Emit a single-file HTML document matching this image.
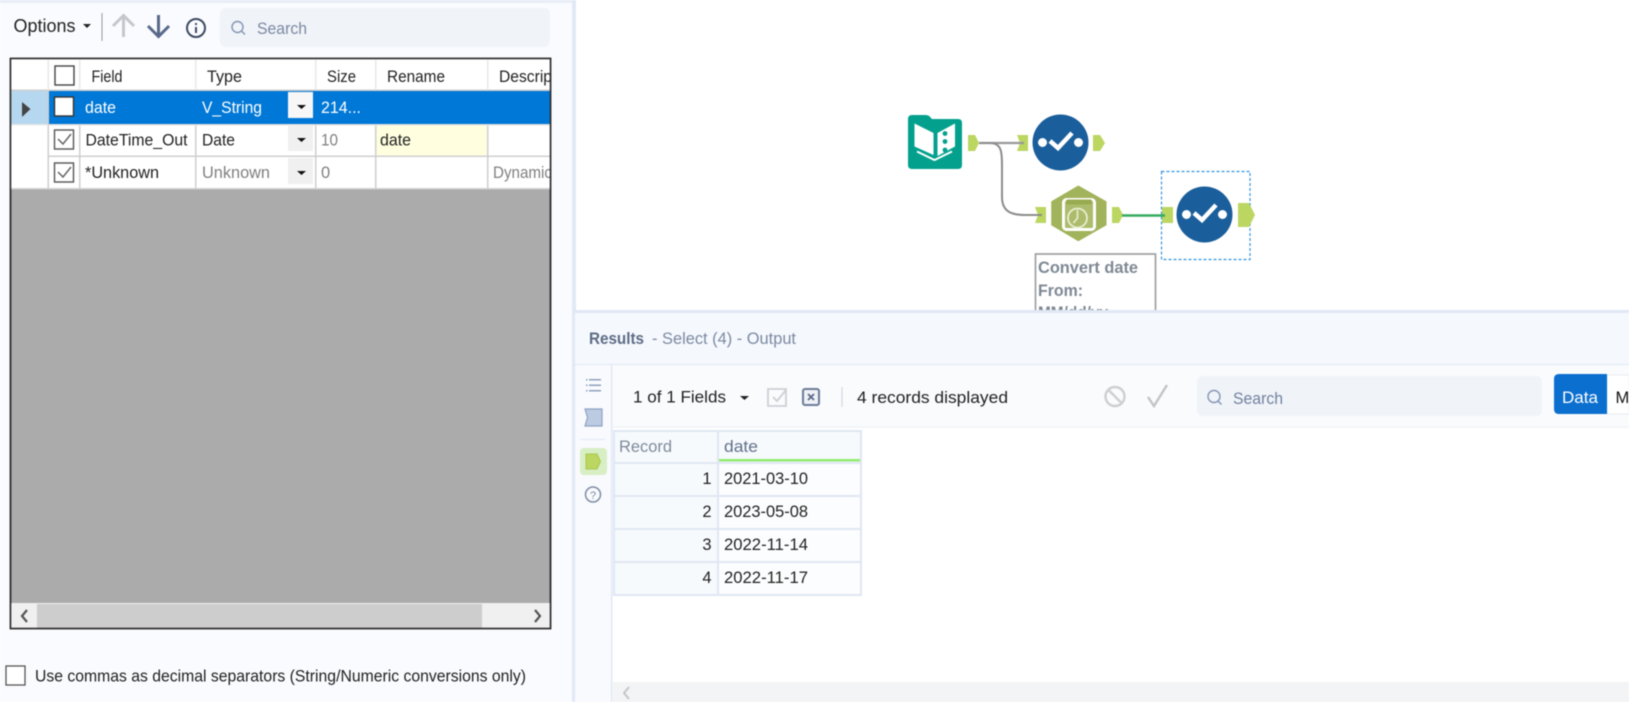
<!DOCTYPE html>
<html><head><meta charset="utf-8"><style>
html,body{margin:0;padding:0;width:1629px;height:702px;overflow:hidden;background:#fff}
svg{display:block;filter:blur(.45px)}
text{font-family:"Liberation Sans",sans-serif;font-size:16.5px;fill:#222}
</style></head><body>
<svg width="1629" height="702" viewBox="0 0 1629 702" xmlns="http://www.w3.org/2000/svg">
<defs>
<clipPath id="g"><rect x="11" y="59" width="539.500" height="569"/></clipPath>
<clipPath id="c"><rect x="1030" y="250" width="130" height="60"/></clipPath>
</defs>
<!-- left panel -->
<rect width="574" height="702" fill="#fafbfe"/>
<rect width="574" height="3" fill="#e8edf6"/>
<rect x="572" width="4" height="702" fill="#e2e9f5"/>
<text x="13.5" y="32" textLength="62" lengthAdjust="spacingAndGlyphs" style="font-size:18px">Options</text>
<path d="M83 24h8l-4 4z" fill="#222"/>
<rect x="101.500" y="13" width="1" height="28" fill="#9a9a9a"/>
<path d="M123.500 37V17M113 26l10.500-10.500L134 26" fill="none" stroke="#c4c8cc" stroke-width="3"/>
<path d="M158.500 15v20M148 26l10.500 10.500L169 26" fill="none" stroke="#58698a" stroke-width="3"/>
<circle cx="196" cy="28" r="9" fill="none" stroke="#3d4a63" stroke-width="2"/>
<rect x="195" y="27" width="2" height="6" fill="#3d4a63"/><rect x="195" y="23" width="2" height="2" fill="#3d4a63"/>
<rect x="220" y="8" width="330" height="39" rx="6" fill="#f0f3f8"/>
<circle cx="237.500" cy="27" r="5.500" fill="none" stroke="#8496b5" stroke-width="1.400"/><path d="M241.500 31l3.500 3.500" stroke="#8496b5" stroke-width="1.400"/>
<text x="257" y="34" textLength="50" lengthAdjust="spacingAndGlyphs" style="fill:#7b89a3">Search</text>

<!-- grid -->
<rect x="10.500" y="58.500" width="540" height="570" fill="#ababab" stroke="#2f2f2f" stroke-width="1.600"/>
<g clip-path="url(#g)">
<rect x="11" y="59" width="540" height="130" fill="#fff"/>
<rect x="11" y="91" width="37" height="33" fill="#b6d7f0"/>
<rect x="376" y="125" width="111" height="31" fill="#ffffe0"/>
<g fill="#cfcfcf">
<rect x="47.500" y="90" width="1.500" height="99"/><rect x="79" y="90" width="1.500" height="99"/><rect x="195" y="90" width="1.500" height="99"/><rect x="315" y="90" width="1.500" height="99"/><rect x="375" y="90" width="1.500" height="99"/><rect x="487" y="90" width="1.500" height="99"/>
<rect x="11" y="89.500" width="540" height="1.500"/><rect x="49" y="155.500" width="502" height="1.500"/><rect x="11" y="188" width="540" height="1.500"/>
</g>
<g fill="#e9e9e9">
<rect x="47.500" y="60" width="1.500" height="30"/><rect x="79" y="60" width="1.500" height="30"/><rect x="195" y="60" width="1.500" height="30"/><rect x="315" y="60" width="1.500" height="30"/><rect x="375" y="60" width="1.500" height="30"/><rect x="487" y="60" width="1.500" height="30"/>
</g>
<rect x="49" y="91" width="502" height="33" fill="#0078d7"/>
<rect x="49" y="124" width="502" height="1.500" fill="#e2e2e2"/>
<rect x="11" y="124" width="37" height="1.500" fill="#e8e8e8"/>
<path d="M22 102l8.500 7-8.500 8z" fill="#444"/>
<!-- checkboxes -->
<rect x="55" y="66" width="19" height="19" fill="#fff" stroke="#444" stroke-width="1.400"/>
<rect x="54.500" y="97" width="19" height="19" fill="#fff" stroke="#333" stroke-width="1.400"/>
<rect x="54.500" y="130" width="19" height="19" fill="#fff" stroke="#555" stroke-width="1.400"/>
<path d="M58 139l5 5 8-10" fill="none" stroke="#666" stroke-width="1.500"/>
<rect x="54.500" y="163" width="19" height="19" fill="#fff" stroke="#555" stroke-width="1.400"/>
<path d="M58 172l5 5 8-10" fill="none" stroke="#666" stroke-width="1.500"/>
<!-- header -->
<text x="91.500" y="82" textLength="31" lengthAdjust="spacingAndGlyphs">Field</text>
<text x="207" y="82" textLength="35" lengthAdjust="spacingAndGlyphs">Type</text>
<text x="327" y="82" textLength="29" lengthAdjust="spacingAndGlyphs">Size</text>
<text x="387" y="82" textLength="58" lengthAdjust="spacingAndGlyphs">Rename</text>
<text x="499" y="82" textLength="53" lengthAdjust="spacingAndGlyphs">Descrip</text>
<!-- row 1 -->
<text x="85" y="113" textLength="31" lengthAdjust="spacingAndGlyphs" style="fill:#fff">date</text>
<text x="202" y="113" textLength="60" lengthAdjust="spacingAndGlyphs" style="fill:#fff">V_String</text>
<rect x="288" y="92" width="25" height="26" fill="#f7f7f7"/><path d="M297 105h9l-4.500 4z" fill="#111"/>
<text x="321" y="113" textLength="40" lengthAdjust="spacingAndGlyphs" style="fill:#fff">214...</text>
<!-- row 2 -->
<text x="85.500" y="145.500" textLength="102" lengthAdjust="spacingAndGlyphs">DateTime_Out</text>
<text x="202" y="145.500" textLength="33" lengthAdjust="spacingAndGlyphs">Date</text>
<rect x="288" y="125" width="25" height="26" fill="#f0f0f0"/><path d="M297 138h9l-4.500 4z" fill="#111"/>
<text x="321" y="145.500" textLength="17" lengthAdjust="spacingAndGlyphs" style="fill:#808080">10</text>
<text x="380" y="145.500" textLength="31" lengthAdjust="spacingAndGlyphs">date</text>
<!-- row 3 -->
<text x="85" y="178" textLength="74" lengthAdjust="spacingAndGlyphs">*Unknown</text>
<text x="202" y="178" textLength="68" lengthAdjust="spacingAndGlyphs" style="fill:#808080">Unknown</text>
<rect x="288" y="158" width="25" height="26" fill="#f0f0f0"/><path d="M297 171h9l-4.500 4z" fill="#111"/>
<text x="321" y="178" style="fill:#808080">0</text>
<text x="493" y="178" textLength="59" lengthAdjust="spacingAndGlyphs" style="fill:#808080">Dynamic</text>
<!-- scrollbar -->
<rect x="11" y="603" width="540" height="26" fill="#f0f0f0"/>
<rect x="37" y="604" width="445" height="24" fill="#cdcdcd"/>
<path d="M27 610l-5 6 5 6" fill="none" stroke="#555" stroke-width="2.200"/>
<path d="M535 610l5 6-5 6" fill="none" stroke="#555" stroke-width="2.200"/>
</g>
<rect x="10.500" y="58.500" width="540" height="570" fill="none" stroke="#2f2f2f" stroke-width="1.600"/>

<rect x="6" y="666" width="19" height="19" fill="#fff" stroke="#555" stroke-width="1.300"/>
<text x="35" y="681.500" textLength="491" lengthAdjust="spacingAndGlyphs">Use commas as decimal separators (String/Numeric conversions only)</text>

<!-- canvas -->
<!-- selection first, anchors on top -->
<rect x="1161.500" y="171.500" width="88.500" height="88" fill="none" stroke="#3694e0" stroke-width="1.200" stroke-dasharray="3 2"/>
<!-- folder -->
<path d="M912 115h14q3 0 5 3l1 1h26q4 0 4 4v42q0 4-4 4h-46q-4 0-4-4v-46q0-4 4-4z" fill="#03a18d"/>
<path d="M914.500 123.500l19 9.500v22l-19-8.500zM937.500 133l17.500-9.500v23l-17.500 9.500z" fill="#fff"/>
<circle cx="945" cy="133.500" r="2.400" fill="#03a18d"/><circle cx="945" cy="141.500" r="2.400" fill="#03a18d"/><circle cx="945" cy="150" r="2.400" fill="#03a18d"/>
<path d="M917 151.500l17.500 8.500 17.500-8.500" fill="none" stroke="#fff" stroke-width="2"/>
<!-- anchors -->
<g fill="#bbd661">
<path d="M968 135h7l4 8-4 8h-7z"/>
<path d="M1017 135h11v16h-11l3-8z"/>
<path d="M1093 135h7l5 8-5 8h-7z"/>
<path d="M1035 207h11v16h-11l3-8z"/>
<path d="M1112 207h7l4 8-4 8h-7z"/>
<path d="M1162 207h11v16h-11z"/>
<path d="M1238 203h11l6 12-6 12h-11z"/>
</g>
<path d="M979 143H1024" fill="none" stroke="#999" stroke-width="2.200"/>
<path d="M979 143H990C1003 143 1002 155 1002 170V197C1002 212 1012 215 1025 215H1042" fill="none" stroke="#8c8c8c" stroke-width="2"/>
<path d="M1122 215.500H1165" stroke="#36ab5f" stroke-width="2.400"/>
<!-- check circles -->
<circle cx="1060.500" cy="142.500" r="28" fill="#1a5e9b"/>
<g fill="#fff"><circle cx="1042.500" cy="142.500" r="4.500"/><circle cx="1078.500" cy="142.500" r="4.500"/></g>
<path d="M1050 141l8 7 14-15" fill="none" stroke="#fff" stroke-width="4.500"/>
<circle cx="1204.500" cy="214.500" r="28" fill="#1a5e9b"/>
<g fill="#fff"><circle cx="1186.500" cy="214.500" r="4.500"/><circle cx="1222.500" cy="214.500" r="4.500"/></g>
<path d="M1194 213l8 7 14-15" fill="none" stroke="#fff" stroke-width="4.500"/>
<!-- hex -->
<path d="M1078.300 186l27.700 15.700v23.300l-27.700 15.700-26.600-15.700v-23.300z" fill="#a1b35b" stroke="#a1b35b" stroke-width="1" stroke-linejoin="round"/>
<rect x="1063.500" y="199.500" width="31" height="30" rx="3" fill="#acbc6c" stroke="#fff" stroke-width="3"/>
<rect x="1066" y="199.500" width="26" height="5" rx="2" fill="#98ab50"/>
<circle cx="1077.500" cy="218" r="9.500" fill="none" stroke="#e8eed2" stroke-width="1.800"/>
<path d="M1077.500 210v8l-4 5" fill="none" stroke="#e8eed2" stroke-width="1.600"/>
<!-- comment -->
<g clip-path="url(#c)">
<rect x="1035.500" y="254" width="120" height="70" fill="#fff" stroke="#9a9a9a" stroke-width="1.600"/>
<text x="1038" y="273" textLength="100" lengthAdjust="spacingAndGlyphs" style="fill:#7e8894;font-weight:bold">Convert date</text>
<text x="1038" y="296" textLength="45" lengthAdjust="spacingAndGlyphs" style="fill:#7e8894;font-weight:bold">From:</text>
<text x="1038" y="318" textLength="70" lengthAdjust="spacingAndGlyphs" style="fill:#7e8894;font-weight:bold">MM/dd/yy</text>
</g>

<!-- results panel -->
<rect x="575" y="311" width="1054" height="391" fill="#f5f8fd"/>
<rect x="575" y="310" width="1054" height="3" fill="#e1e8f5"/>
<rect x="575" y="364" width="1054" height="1.500" fill="#e1e8f5"/>
<text x="589" y="344" textLength="55" lengthAdjust="spacingAndGlyphs" style="fill:#5d6c85;font-weight:bold">Results</text>
<text x="652" y="344" textLength="144" lengthAdjust="spacingAndGlyphs" style="fill:#7c8aa2">- Select (4) - Output</text>
<rect x="612" y="365" width="1017" height="63" fill="#f9fbfd"/>
<rect x="612" y="428" width="1017" height="274" fill="#fff"/>
<rect x="576" y="365" width="35" height="337" fill="#f8fafd"/>
<rect x="611" y="365" width="1.500" height="337" fill="#e1e8f5"/>
<rect x="612" y="426" width="1017" height="2" fill="#f3f5f8"/>
<!-- sidebar -->
<g fill="#8fa0bd"><rect x="589" y="379" width="12" height="1.500"/><rect x="589" y="384.500" width="12" height="1.500"/><rect x="589" y="390" width="12" height="1.500"/><rect x="586" y="379" width="1.500" height="1.500"/><rect x="586" y="384.500" width="1.500" height="1.500"/><rect x="586" y="390" width="1.500" height="1.500"/></g>
<path d="M585 409h17v17h-17l2.500-8.500z" fill="#bccbe2" stroke="#8fa3c3" stroke-width="1.200"/>
<rect x="580" y="439" width="25" height="1" fill="#e1e8f5"/>
<rect x="580" y="448" width="27" height="27" rx="4" fill="#d8eec4"/>
<path d="M586 454h11l3.500 7.500-3.500 7.500h-11z" fill="#bbd661" stroke="#a9c84f" stroke-width="1"/>
<circle cx="593" cy="494.500" r="7.500" fill="none" stroke="#7f8da6" stroke-width="1.500"/>
<text x="590" y="499" style="font-size:11px;fill:#7f8da6">?</text>
<!-- toolbar -->
<text x="633" y="402.500" textLength="93" lengthAdjust="spacingAndGlyphs">1 of 1 Fields</text>
<path d="M740 396h9l-4.500 4z" fill="#222"/>
<path d="M768 389h18v17h-18z" fill="none" stroke="#cdd0d5" stroke-width="1.800"/><path d="M773 397l4 4 9-11" fill="none" stroke="#cdd0d5" stroke-width="1.800"/>
<rect x="803" y="389" width="16" height="16" rx="2" fill="#eef1f6" stroke="#6c7c98" stroke-width="2"/><path d="M808 394l6 6m0-6l-6 6" stroke="#5b6b88" stroke-width="1.800"/>
<rect x="841.500" y="387" width="1" height="20" fill="#ccd3de"/>
<text x="857" y="403" textLength="151" lengthAdjust="spacingAndGlyphs">4 records displayed</text>
<circle cx="1115" cy="396.500" r="9.500" fill="none" stroke="#cfcfcf" stroke-width="2.400"/><path d="M1108.500 390l13 13" stroke="#cfcfcf" stroke-width="2.400"/>
<path d="M1148 397l6 9 13-21" fill="none" stroke="#c4c4c4" stroke-width="2.400"/>
<rect x="1197" y="376" width="345" height="40" rx="6" fill="#f0f3f8"/>
<circle cx="1214" cy="396.500" r="6" fill="none" stroke="#8496b5" stroke-width="1.400"/><path d="M1218 401l3.500 3.500" stroke="#8496b5" stroke-width="1.400"/>
<text x="1233" y="404" textLength="50" lengthAdjust="spacingAndGlyphs" style="fill:#7282a0">Search</text>
<rect x="1607" y="375" width="22" height="39" fill="#fff" stroke="#e8ecf2"/>
<path d="M1559 374h48v40h-48q-5 0-5-5v-30q0-5 5-5z" fill="#0b6fcf"/>
<text x="1562" y="403" textLength="36" lengthAdjust="spacingAndGlyphs" style="fill:#fff">Data</text>
<text x="1615.500" y="403" style="fill:#111">M</text>
<!-- table -->
<g fill="#f7fafd" stroke="#dfe7f3" stroke-width="2">
<rect x="614" y="431" width="104" height="32"/><rect x="718" y="431" width="143" height="32"/>
<rect x="614" y="463" width="104" height="33"/><rect x="718" y="463" width="143" height="33" fill="#fcfdfe"/>
<rect x="614" y="496" width="104" height="33"/><rect x="718" y="496" width="143" height="33" fill="#fcfdfe"/>
<rect x="614" y="529" width="104" height="33"/><rect x="718" y="529" width="143" height="33" fill="#fcfdfe"/>
<rect x="614" y="562" width="104" height="33"/><rect x="718" y="562" width="143" height="33" fill="#fcfdfe"/>
</g>
<rect x="719" y="459" width="141" height="2.500" fill="#8fec6e"/>
<text x="619" y="452" textLength="53" lengthAdjust="spacingAndGlyphs" style="fill:#7e8b9a">Record</text>
<text x="724" y="452" textLength="34" lengthAdjust="spacingAndGlyphs" style="fill:#62718a">date</text>
<text x="711.500" y="484" text-anchor="end">1</text><text x="724" y="484" textLength="84" lengthAdjust="spacingAndGlyphs">2021-03-10</text>
<text x="711.500" y="517" text-anchor="end">2</text><text x="724" y="517" textLength="84" lengthAdjust="spacingAndGlyphs">2023-05-08</text>
<text x="711.500" y="550" text-anchor="end">3</text><text x="724" y="550" textLength="84" lengthAdjust="spacingAndGlyphs">2022-11-14</text>
<text x="711.500" y="583" text-anchor="end">4</text><text x="724" y="583" textLength="84" lengthAdjust="spacingAndGlyphs">2022-11-17</text>
<!-- bottom scroll -->
<rect x="613" y="682" width="1016" height="20" fill="#f3f4f5"/>
<path d="M629 687l-5 6 5 6" fill="none" stroke="#c6c6c6" stroke-width="2"/>
</svg>
</body></html>
